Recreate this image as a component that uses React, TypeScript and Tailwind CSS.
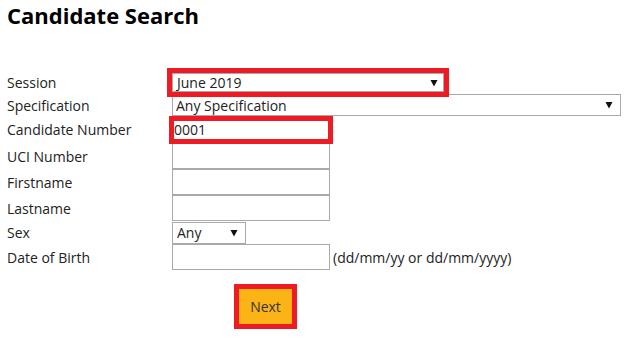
const font = { fontFamily: '"Open Sans", "Liberation Sans", sans-serif' }

const boxCls = 'h-[26px] w-[158px] border border-[#a9a9a9] bg-white'
const redCls = 'outline-[5px] outline-solid outline-[#ed1c24]'

function Arrow() {
  return (
    <svg width="8" height="8" viewBox="0 0 8 8" className="shrink-0">
      <polygon points="0.5,1 7.5,1 4,7.5" fill="#111" />
    </svg>
  )
}

function Row({ label, h, children }: { label: string; h: string; children: React.ReactNode }) {
  return (
    <div className={`flex items-center ${h}`}>
      <span className="w-[165px] shrink-0">{label}</span>
      {children}
    </div>
  )
}

export default function App() {
  return (
    <div className="min-h-screen bg-white pl-[7px] text-[14px] text-[#222]" style={font}>
      <h1 className="text-[22px] font-bold leading-[30px] text-black">Candidate Search</h1>

      <div className="mt-[41px] flex flex-col">
        <Row label="Session" h="h-[23px]">
          <div className={`relative z-10 flex h-[19px] w-[272px] items-center justify-between border border-[#a9a9a9] bg-white pl-[4px] pr-[5px] ${redCls}`}>
            <span>June 2019</span>
            <Arrow />
          </div>
        </Row>
        <Row label="Specification" h="h-[22px]">
          <div className="flex h-[22px] w-[449px] items-center justify-between border border-[#a9a9a9] bg-white pl-[3px] pr-[7px]">
            <span>Any Specification</span>
            <Arrow />
          </div>
        </Row>
        <Row label="Candidate Number" h="h-[27px]">
          <div className={`relative z-10 ml-[2px] flex h-[18px] w-[154px] items-center bg-white ${redCls}`}>
            <span>0001</span>
          </div>
        </Row>
        <Row label="UCI Number" h="h-[26px]">
          <div className={boxCls} />
        </Row>
        <Row label="Firstname" h="h-[26px]">
          <div className={boxCls} />
        </Row>
        <Row label="Lastname" h="h-[26px]">
          <div className={boxCls} />
        </Row>
        <Row label="Sex" h="h-[23px]">
          <div className="flex h-[22px] w-[74px] items-center justify-between border border-[#a9a9a9] bg-white pl-[4px] pr-[7px]">
            <span>Any</span>
            <Arrow />
          </div>
        </Row>
        <Row label="Date of Birth" h="h-[26px]">
          <div className={boxCls} />
          <span className="ml-[3px]">(dd/mm/yy or dd/mm/yyyy)</span>
        </Row>
      </div>

      <div className="mt-[19px] pl-[232px]">
        <button className={`h-[35px] w-[53px] bg-[#fcb316] text-[14px] text-[#333] ${redCls}`} style={font}>
          Next
        </button>
      </div>
    </div>
  )
}
